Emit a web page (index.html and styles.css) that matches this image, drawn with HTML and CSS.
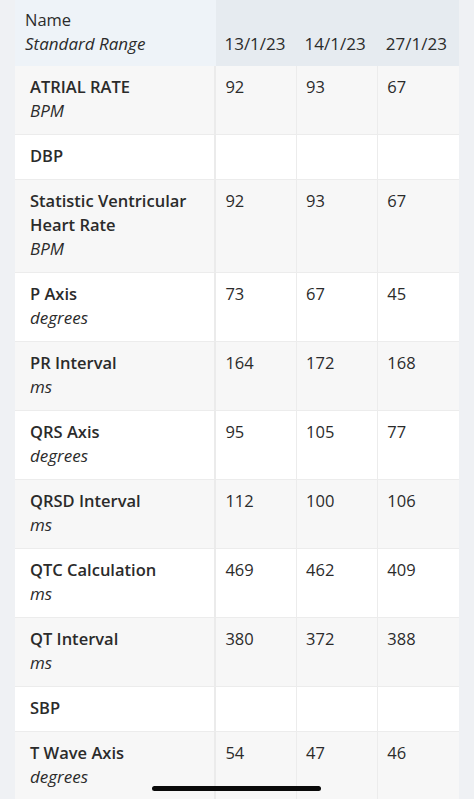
FILE: index.html
```html
<!DOCTYPE html>
<html>
<head>
<meta charset="utf-8">
<link rel="stylesheet" href="styles.css">
</head>
<body>
<div class="page">
  <table class="grid">
    <colgroup>
      <col class="c-name">
      <col class="c-date">
      <col class="c-date">
      <col class="c-date">
    </colgroup>
    <thead>
      <tr>
        <th class="h-name"><div>Name</div><div class="unit">Standard Range</div></th>
        <th class="h-date">13/1/23</th>
        <th class="h-date">14/1/23</th>
        <th class="h-date">27/1/23</th>
      </tr>
    </thead>
    <tbody>
      <tr class="alt"><td class="name"><div class="label">ATRIAL RATE</div><div class="unit">BPM</div></td><td>92</td><td>93</td><td>67</td></tr>
      <tr><td class="name"><div class="label">DBP</div></td><td></td><td></td><td></td></tr>
      <tr class="alt"><td class="name"><div class="label">Statistic Ventricular Heart Rate</div><div class="unit">BPM</div></td><td>92</td><td>93</td><td>67</td></tr>
      <tr><td class="name"><div class="label">P Axis</div><div class="unit">degrees</div></td><td>73</td><td>67</td><td>45</td></tr>
      <tr class="alt"><td class="name"><div class="label">PR Interval</div><div class="unit">ms</div></td><td>164</td><td>172</td><td>168</td></tr>
      <tr><td class="name"><div class="label">QRS Axis</div><div class="unit">degrees</div></td><td>95</td><td>105</td><td>77</td></tr>
      <tr class="alt"><td class="name"><div class="label">QRSD Interval</div><div class="unit">ms</div></td><td>112</td><td>100</td><td>106</td></tr>
      <tr><td class="name"><div class="label">QTC Calculation</div><div class="unit">ms</div></td><td>469</td><td>462</td><td>409</td></tr>
      <tr class="alt"><td class="name"><div class="label">QT Interval</div><div class="unit">ms</div></td><td>380</td><td>372</td><td>388</td></tr>
      <tr><td class="name"><div class="label">SBP</div></td><td></td><td></td><td></td></tr>
      <tr class="alt"><td class="name"><div class="label">T Wave Axis</div><div class="unit">degrees</div></td><td>54</td><td>47</td><td>46</td></tr>
    </tbody>
  </table>
</div>
<div class="home-indicator"></div>
</body>
</html>
```
FILE: styles.css
```css
html, body {
  margin: 0;
  padding: 0;
  background: #eff1f4;
  height: 100%;
  overflow: hidden;
}
body {
  font-family: "Open Sans", "Noto Sans", sans-serif;
  color: #2b2b2b;
  font-size: 16.5px;
  line-height: 24px;
}
.page {
  padding: 0 15px;
}
.grid {
  width: 444px;
  table-layout: fixed;
  border-collapse: collapse;
  border-spacing: 0;
}
.c-name { width: 200px; }
.c-date { width: 81px; }
th {
  font-weight: normal;
  text-align: left;
}
.h-name {
  background: #eef3f8;
  padding: 8px 10px 10px 10px;
  vertical-align: top;
  border-right: 2px solid #eef3f8;
}
.h-date {
  background: #e6ebf0;
  padding: 0 0 10px 8px;
  vertical-align: bottom;
  white-space: nowrap;
  font-size: 17px;
}
td {
  background: #ffffff;
  vertical-align: top;
  padding: 9px 8px 11px 9px;
  border-top: 1px solid #ececec;
  border-left: 1px solid #ececec;
}
tbody tr:first-child td {
  border-top: none;
}
tr.alt td {
  background: #f7f7f7;
}
td.name {
  padding-left: 15px;
  border-left: none;
  border-right: 2px solid #ebebeb;
}
.label {
  font-weight: 600;
}
.unit {
  font-style: italic;
  font-size: 17px;
}
.home-indicator {
  position: fixed;
  left: 152px;
  bottom: 8px;
  width: 169px;
  height: 5px;
  border-radius: 3px;
  background: #0a0a0a;
}
```
